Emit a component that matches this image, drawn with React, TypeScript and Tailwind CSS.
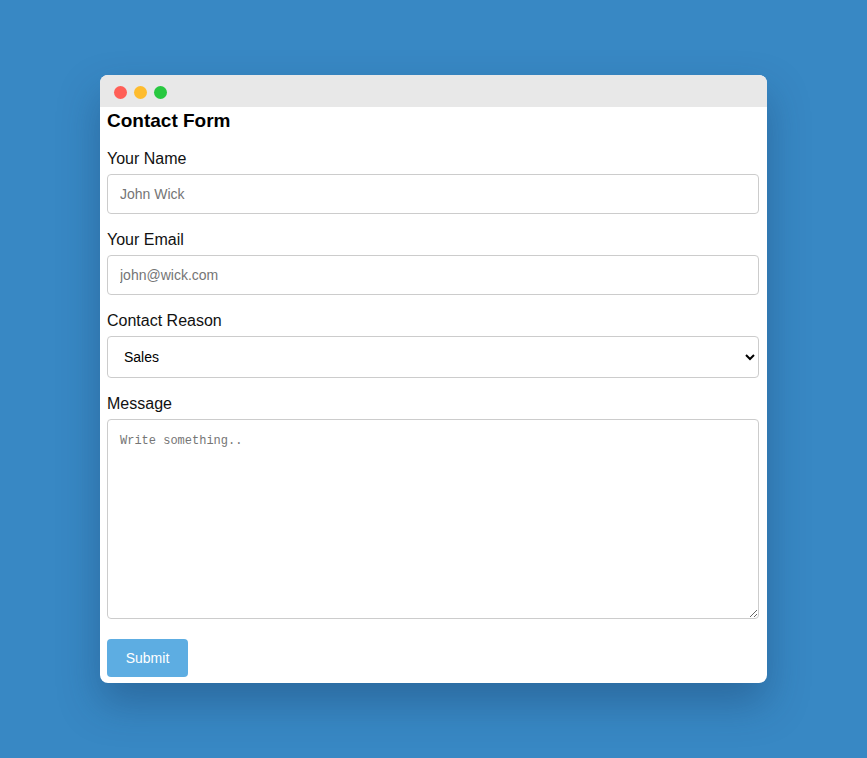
export default function App() {
  return (
    <div
      className="min-h-[758px] w-full bg-[#3888c4] flex justify-center pt-[75px]"
      style={{ fontFamily: '"Liberation Sans", Arial, sans-serif' }}
    >
      <div className="w-[667px] h-[608px] bg-white rounded-lg overflow-hidden shadow-[0_20px_40px_rgba(20,50,90,0.35)] flex flex-col">
        {/* title bar */}
        <div className="h-8 bg-[#e8e8e8] flex items-center gap-[7px] pl-[14px] pt-[2px] shrink-0">
          <span className="w-[13px] h-[13px] rounded-full bg-[#ff5f57]" />
          <span className="w-[13px] h-[13px] rounded-full bg-[#febc2e]" />
          <span className="w-[13px] h-[13px] rounded-full bg-[#28c840]" />
        </div>

        <form className="flex flex-col pl-[7px] pr-2" onSubmit={(e) => e.preventDefault()}>
          <h1 className="text-[19px] font-bold text-black leading-[23px] mt-[2px]">Contact Form</h1>

          <label className="text-base text-[#111] leading-[18px] mt-[18px]">Your Name</label>
          <input
            type="text"
            placeholder="John Wick"
            className="mt-[6px] h-10 w-full border border-[#ccc] rounded px-3 text-sm placeholder:text-[#757575] outline-none"
          />

          <label className="text-base text-[#111] leading-[18px] mt-[17px]">Your Email</label>
          <input
            type="email"
            placeholder="john@wick.com"
            className="mt-[6px] h-10 w-full border border-[#ccc] rounded px-3 text-sm placeholder:text-[#757575] outline-none"
          />

          <label className="text-base text-[#111] leading-[18px] mt-[17px]">Contact Reason</label>
          <select
            defaultValue="sales"
            className="mt-[6px] h-[42px] w-full border border-[#ccc] rounded pl-3 pr-1 text-sm text-black bg-white outline-none appearance-auto"
          >
            <option value="sales">Sales</option>
            <option value="support">Support</option>
            <option value="other">Other</option>
          </select>

          <label className="text-base text-[#111] leading-[18px] mt-[17px]">Message</label>
          <textarea
            placeholder="Write something.."
            className="mt-[6px] h-[200px] w-full border border-[#ccc] rounded px-3 pt-3 text-[12px] placeholder:text-[#757575] outline-none resize-y block"
            style={{ fontFamily: '"Liberation Mono", monospace' }}
          />

          <div>
            <button
              type="submit"
              className="mt-5 w-[81px] h-[38px] bg-[#5dade2] text-white text-sm rounded"
            >
              Submit
            </button>
          </div>
        </form>
      </div>
    </div>
  );
}
